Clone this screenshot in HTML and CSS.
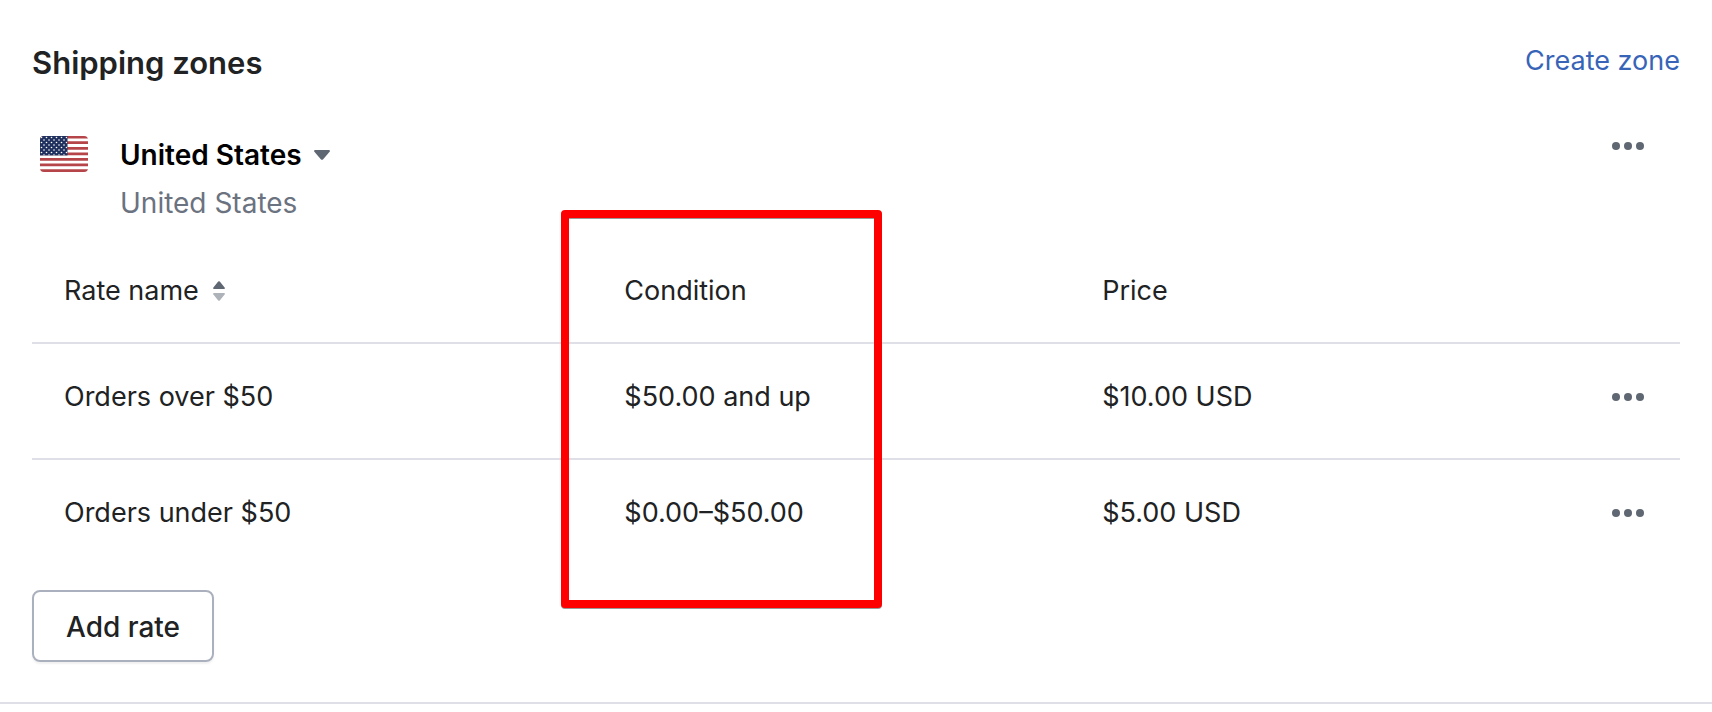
FILE: index.html
```html
<!DOCTYPE html>
<html lang="en">
<head>
    <meta charset="UTF-8">
    <meta name="viewport" content="width=device-width, initial-scale=1.0">
    <title>Shipping zones</title>
    <link rel="stylesheet" href="styles.css">
</head>
<body>
    <section class="zones">
        <header class="zones-header">
            <h2>Shipping zones</h2>
            <a href="#create-zone">Create zone</a>
        </header>

        <div class="zone">
            <svg class="flag" viewBox="0 0 48 36" aria-hidden="true">
                <defs>
                    <clipPath id="flag-clip"><rect width="48" height="36" rx="4"/></clipPath>
                    <pattern id="stars" width="5" height="5" patternUnits="userSpaceOnUse">
                        <circle cx="1.5" cy="1.5" r="0.8" fill="#fff"/>
                        <circle cx="4" cy="4" r="0.8" fill="#fff"/>
                    </pattern>
                </defs>
                <g clip-path="url(#flag-clip)">
                    <rect width="48" height="36" fill="#fff"/>
                    <path d="M0 1.2h48M0 6.7h48M0 12.3h48M0 17.8h48M0 23.3h48M0 28.9h48M0 34.6h48" stroke="#b54548" stroke-width="2.7"/>
                    <rect width="27.5" height="19.4" fill="#20305f"/>
                    <rect width="27.5" height="19.4" fill="url(#stars)"/>
                </g>
            </svg>
            <div class="zone-info">
                <button class="zone-name" type="button">
                    United States
                    <svg class="caret" viewBox="0 0 16 10" aria-hidden="true"><path d="M1.2 0h13.6q1.8.3.8 1.8L9.2 9.2q-1.2 1.2-2.4 0L.4 1.8Q-.6.3 1.2 0z"/></svg>
                </button>
                <p class="zone-countries">United States</p>
            </div>
            <button class="more" type="button" aria-label="Zone actions">
                <svg viewBox="0 0 32 8"><circle cx="4" cy="4" r="4"/><circle cx="16" cy="4" r="4"/><circle cx="28" cy="4" r="4"/></svg>
            </button>
        </div>

        <table class="rates">
            <thead>
                <tr>
                    <th class="col-name" scope="col">
                        <button class="sort" type="button">
                            Rate name
                            <svg viewBox="0 0 12 20" aria-hidden="true"><path d="M.6 8Q-.4 7 .6 6.2L5.2.6q.8-.8 1.6 0l4.6 5.6q1 .8 0 1.8z"/><path class="sort-off" d="M.6 12q-1 1 0 1.8l4.6 5.6q.8.8 1.6 0l4.6-5.6q1-.8 0-1.8z"/></svg>
                        </button>
                    </th>
                    <th class="col-condition" scope="col">Condition<span class="highlight"></span></th>
                    <th class="col-price" scope="col">Price</th>
                    <th class="col-actions"></th>
                </tr>
            </thead>
            <tbody>
                <tr>
                    <td>Orders over $50</td>
                    <td>$50.00 and up</td>
                    <td>$10.00 USD</td>
                    <td class="col-actions">
                        <button class="more" type="button" aria-label="Rate actions">
                            <svg viewBox="0 0 32 8"><circle cx="4" cy="4" r="4"/><circle cx="16" cy="4" r="4"/><circle cx="28" cy="4" r="4"/></svg>
                        </button>
                    </td>
                </tr>
                <tr>
                    <td>Orders under $50</td>
                    <td>$0.00–$50.00</td>
                    <td>$5.00 USD</td>
                    <td class="col-actions">
                        <button class="more" type="button" aria-label="Rate actions">
                            <svg viewBox="0 0 32 8"><circle cx="4" cy="4" r="4"/><circle cx="16" cy="4" r="4"/><circle cx="28" cy="4" r="4"/></svg>
                        </button>
                    </td>
                </tr>
            </tbody>
        </table>

        <button class="add-rate" type="button">Add rate</button>
    </section>
</body>
</html>
```

FILE: styles.css
```css
* {
    box-sizing: border-box;
}

body {
    margin: 0;
    background-color: #fff;
    color: #202223;
    font-family: Inter, "Liberation Sans", sans-serif;
    font-size: 27px;
    line-height: 40px;
}

button {
    padding: 0;
    border: none;
    background: none;
    color: inherit;
    font: inherit;
    cursor: pointer;
}

svg {
    display: block;
    fill: #5f6773;
}

.zones {
    padding: 41px 32px 40px;
    border-bottom: 2px solid #dfe0e7;
}

.zones-header {
    display: flex;
    justify-content: space-between;
    margin-bottom: 50px;
}

.zones-header h2 {
    margin: 0;
    font-size: 31px;
    font-weight: 600;
    line-height: 44px;
}

.zones-header a {
    color: #3864b8;
    text-decoration: none;
}

.zone {
    display: flex;
    align-items: flex-start;
    padding: 0 36px 0 8px;
    margin-bottom: 16px;
}

.flag {
    width: 48px;
    height: 36px;
    margin: 1px 32px 0 0;
}

.zone-info {
    flex: 1;
    font-size: 28px;
}

.zone-name {
    display: flex;
    align-items: center;
    gap: 12px;
    color: #000;
    font-weight: 600;
}

.caret {
    width: 16px;
    height: 10px;
}

.zone-countries {
    margin: 8px 0 0;
    color: #6b7280;
}

.more svg {
    width: 32px;
    height: 8px;
}

.zone .more {
    padding: 7px 0;
}

.rates {
    width: 100%;
    border-collapse: separate;
    border-spacing: 0;
    table-layout: fixed;
}

.rates th,
.rates td {
    padding: 32px 0 42px 32px;
    text-align: left;
    font-weight: 400;
}

.rates th {
    padding-bottom: 31px;
}

.rates td {
    padding-top: 33px;
    padding-bottom: 41px;
}

.rates th,
.rates tr:not(:last-child) td {
    border-bottom: 2px solid #dfe0e7;
}

.col-name {
    width: 34%;
}

.col-condition {
    position: relative;
    width: 29%;
}

.rates .col-actions {
    padding-top: 32px;
    padding-right: 36px;
}

.col-actions .more {
    display: block;
    margin-left: auto;
}

.sort {
    display: flex;
    align-items: center;
    gap: 14px;
}

.sort svg {
    width: 12px;
    height: 20px;
}

.sort-off {
    fill: #aeb3ba;
}

/* Red frame over the whole condition column */
.highlight {
    position: absolute;
    top: -29px;
    left: -31px;
    width: 321px;
    height: 398px;
    border: 8px solid #f00;
    border-radius: 4px;
    filter: drop-shadow(0 1px 0 rgba(0, 0, 0, 0.4));
    pointer-events: none;
}

.add-rate {
    display: block;
    margin-top: 16px;
    padding: 15px 32px 13px;
    border: 2px solid #aab0bd;
    border-radius: 8px;
    box-shadow: 0 2px 2px rgba(0, 0, 0, 0.06);
    font-size: 28px;
    font-weight: 500;
}
```
